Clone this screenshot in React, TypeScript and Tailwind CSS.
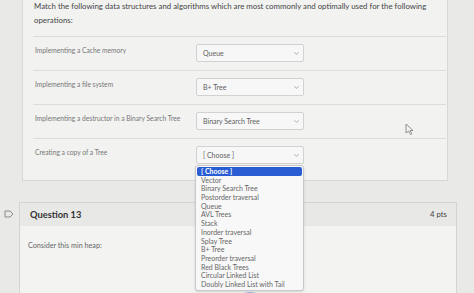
import { ChevronDown } from "lucide-react";

const rows = [
  { label: "Implementing a Cache memory", value: "Queue" },
  { label: "Implementing a file system", value: "B+ Tree" },
  { label: "Implementing a destructor in a Binary Search Tree", value: "Binary Search Tree" },
  { label: "Creating a copy of a Tree", value: "[ Choose ]", open: true },
];

const options = [
  "[ Choose ]",
  "Vector",
  "Binary Search Tree",
  "Postorder traversal",
  "Queue",
  "AVL Trees",
  "Stack",
  "Inorder traversal",
  "Splay Tree",
  "B+ Tree",
  "Preorder traversal",
  "Red Black Trees",
  "Circular Linked List",
  "Doubly Linked List with Tail",
];

function Select({ value, open }: { value: string; open?: boolean }) {
  return (
    <div className="relative">
      <div className="flex h-[18px] w-[108px] items-center justify-between rounded-[2px] border border-[#d2d2d2] bg-[#f7f7f7] pl-[6px] pr-[3px]">
        <span className="text-[7px] text-[#606060]">{value}</span>
        <ChevronDown size={7} strokeWidth={2.5} className="text-[#888]" />
      </div>
      {open && (
        <div className="absolute left-[-1px] top-[19px] z-10 w-[109px] rounded-[3px] border border-[#c8c8c8] bg-[#f8f8f8] px-px pb-[1px] pt-px shadow-sm">
          {options.map((o, i) => (
            <div
              key={o}
              className={`h-[8.7px] px-[4px] text-[7px] leading-[8.7px] ${
                i === 0 ? "rounded-[2px] bg-[#2a5cd4] font-bold text-white" : "text-[#666]"
              }`}
            >
              {o}
            </div>
          ))}
        </div>
      )}
    </div>
  );
}

export default function App() {
  return (
    <div className="relative h-[293px] w-[474px] overflow-hidden bg-[#e9e9e8] font-['Lato',sans-serif]">
      <div className="ml-[22px] w-[426px] border-x border-b border-[#d8d8d8] bg-[#f2f2f1] pb-[8px] pl-[10px] pr-px">
        <p className="-mt-px mb-[9px] w-[410px] pl-px text-[7.85px] leading-[14px] text-[#454545]">
          Match the following data structures and algorithms which are most commonly and optimally used for the following
          operations:
        </p>
        {rows.map((r) => (
          <div key={r.label} className="flex h-[34px] items-start border-t border-[#dcdcdc]">
            <div className="w-[163px] pl-[2px] pt-[9px] text-[6.7px] leading-[8px] text-[#777]">{r.label}</div>
            <div className="pt-[7px]">
              <Select value={r.value} open={r.open} />
            </div>
          </div>
        ))}
      </div>

      <div className="relative ml-[19px] mt-[21px] w-[438px] border border-[#d4d4d4]">
        <svg className="absolute left-[-16px] top-[7px]" width="10" height="8" viewBox="0 0 10 8">
          <path d="M1 1 H6 L9 4 L6 7 H1 Z" fill="none" stroke="#8a8a8a" strokeWidth="1" />
        </svg>
        <div className="flex h-[23px] items-center justify-between bg-[#e8e8e7] pl-[10px] pr-[9px]">
          <span className="text-[9.3px] font-bold text-[#333]">Question 13</span>
          <span className="text-[7.8px] text-[#444]">4 pts</span>
        </div>
        <div className="relative h-[80px] bg-[#f3f3f2] pl-[8px] pt-[15px]">
          <p className="text-[7.2px] text-[#666]">Consider this min heap:</p>
          <svg className="absolute left-[180px] top-[62px]" width="100" height="30" viewBox="0 0 100 30">
            <circle cx="8" cy="8" r="3" fill="#c9a9a0" />
            <circle cx="50" cy="38" r="33" fill="none" stroke="#3a6ad0" strokeWidth="1.2" />
            <circle cx="92" cy="8" r="3" fill="#c9a9a0" />
          </svg>
        </div>
      </div>

      <svg className="absolute left-[405px] top-[123px]" width="9" height="12" viewBox="0 0 9 12">
        <path d="M1 1 L1 10 L3.5 8 L5.5 11.5 L6.8 10.8 L5 7.5 L8 7.5 Z" fill="#f4f4f4" stroke="#777" strokeWidth="0.8" />
      </svg>
    </div>
  );
}
